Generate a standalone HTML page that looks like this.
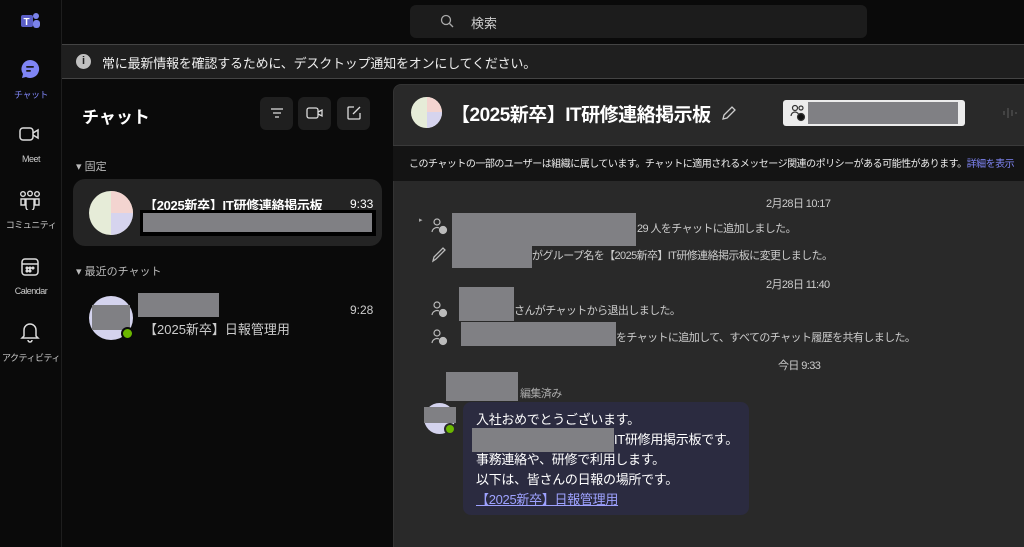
<!DOCTYPE html>
<html><head><meta charset="utf-8"><style>
*{margin:0;padding:0;box-sizing:border-box}
body{width:1024px;height:547px;overflow:hidden;background:#0a0a0a;font-family:"Liberation Sans","Noto Sans CJK JP",sans-serif;color:#fff;position:relative}
.a{position:absolute}
.g{background:#808084;position:absolute}
.rail{left:0;top:0;width:62px;height:547px;border-right:1px solid #1e1e1e}
.ri{position:absolute;left:0;width:62px;text-align:center;font-size:9px;color:#ccc;letter-spacing:-0.5px;white-space:nowrap}
.sys{font-size:11px;color:#ccc;position:absolute;letter-spacing:-0.6px;white-space:nowrap}
</style></head><body>
<div class="a rail">
 <svg class="a" style="left:19px;top:11px" width="22" height="20"><rect x="2" y="4" width="12" height="12" rx="2" fill="#5b5fc7"/><text x="4.5" y="14" font-size="10" font-weight="bold" fill="#fff" font-family="Liberation Sans">T</text><circle cx="17" cy="5" r="3" fill="#7b83eb"/><rect x="14" y="9" width="7" height="8" rx="3" fill="#7b83eb"/></svg>
 <svg class="a" style="left:19px;top:58px" width="22" height="22"><path d="M11 2a9 9 0 1 1-4 17l-4 1 1-4A9 9 0 0 1 11 2z" fill="#7f85f5"/><rect x="7" y="8" width="8" height="1.8" rx="1" fill="#1a1a1a"/><rect x="7" y="12" width="5" height="1.8" rx="1" fill="#1a1a1a"/></svg>
 <div class="ri" style="top:88px;color:#7f85f5">チャット</div>
 <svg class="a" style="left:19px;top:125px" width="22" height="18"><rect x="1" y="3" width="13" height="12" rx="3" fill="none" stroke="#ddd" stroke-width="1.5"/><path d="M14 8l5-3v8l-5-3" fill="none" stroke="#ddd" stroke-width="1.5"/></svg>
 <div class="ri" style="top:154px">Meet</div>
 <svg class="a" style="left:18px;top:190px" width="24" height="20" fill="none" stroke="#ddd" stroke-width="1.4"><circle cx="5" cy="4" r="2.3"/><circle cx="12" cy="3.5" r="2.3"/><circle cx="19" cy="4" r="2.3"/><path d="M3 9h4v6H3zM8 9h8v8a4 4 0 0 1-8 0zM17 9h4v6h-4z"/></svg>
 <div class="ri" style="top:218px">コミュニティ</div>
 <svg class="a" style="left:20px;top:257px" width="20" height="20" fill="none" stroke="#ddd" stroke-width="1.5"><rect x="2" y="2" width="16" height="16" rx="3"/><path d="M2 7h16"/><circle cx="7" cy="11" r=".8" fill="#ddd"/><circle cx="10" cy="11" r=".8" fill="#ddd"/><circle cx="13" cy="11" r=".8" fill="#ddd"/><circle cx="7" cy="14" r=".8" fill="#ddd"/><circle cx="10" cy="14" r=".8" fill="#ddd"/></svg>
 <div class="ri" style="top:286px">Calendar</div>
 <svg class="a" style="left:20px;top:321px" width="20" height="22" fill="none" stroke="#ddd" stroke-width="1.5"><path d="M4 15V9a6 6 0 0 1 12 0v6l2 2H2z"/><path d="M8 19a2 2 0 0 0 4 0"/></svg>
 <div class="ri" style="top:351px">アクティビティ</div>
</div>
<div class="a" style="left:410px;top:5px;width:457px;height:33px;background:#1c1c1c;border-radius:6px"></div>
<svg class="a" style="left:440px;top:14px" width="14" height="14" fill="none" stroke="#aaa" stroke-width="1.3"><circle cx="6" cy="6" r="4.5"/><path d="M9.5 9.5l3.5 3.5"/></svg>
<div class="a" style="left:471px;top:13px;font-size:13px;color:#ccc">検索</div>
<div class="a" style="left:62px;top:44px;width:962px;height:35px;background:#1f1f1f;border-top:1px solid #444;border-bottom:1px solid #444"></div>
<div class="a" style="left:76px;top:54px;width:15px;height:15px;border-radius:50%;background:#c0c0c0;color:#1f1f1f;font-size:11px;text-align:center;line-height:15px;font-weight:bold">i</div>
<div class="a" style="left:102px;top:53px;font-size:13px;color:#eee;letter-spacing:-0.2px">常に最新情報を確認するために、デスクトップ通知をオンにしてください。</div>

<div class="a" style="left:82px;top:103px;font-size:17px;font-weight:bold">チャット</div>
<div class="a" style="left:260px;top:97px;width:33px;height:33px;background:#1f1f1f;border-radius:6px"></div>
<div class="a" style="left:298px;top:97px;width:33px;height:33px;background:#1f1f1f;border-radius:6px"></div>
<div class="a" style="left:337px;top:97px;width:33px;height:33px;background:#1f1f1f;border-radius:6px"></div>
<svg class="a" style="left:269px;top:106px" width="16" height="14" stroke="#ddd" stroke-width="1.2"><path d="M2 3h12M4 7h8M6 11h4"/></svg>
<svg class="a" style="left:306px;top:106px" width="18" height="14" fill="none" stroke="#ddd" stroke-width="1.3"><rect x="1" y="2" width="11" height="10" rx="2"/><path d="M12 6l4-2v6l-4-2"/></svg>
<svg class="a" style="left:346px;top:105px" width="16" height="16" fill="none" stroke="#ddd" stroke-width="1.3"><path d="M8 2H3a1 1 0 0 0-1 1v10a1 1 0 0 0 1 1h10a1 1 0 0 0 1-1V8"/><path d="M7 9l7-7"/></svg>
<div class="a" style="left:76px;top:158px;font-size:11px;color:#bbb">▾ 固定</div>
<div class="a" style="left:73px;top:179px;width:309px;height:67px;background:#242424;border-radius:12px"></div>
<div class="a" style="left:89px;top:191px;width:44px;height:44px;border-radius:50%;overflow:hidden;background:#e6ecd8"><div class="a" style="left:22px;top:0;width:22px;height:22px;background:#f3d4d0"></div><div class="a" style="left:22px;top:22px;width:22px;height:22px;background:#d6d4ee"></div></div>
<div class="a" style="left:144px;top:195px;font-size:13px;font-weight:bold;letter-spacing:-0.3px">【2025新卒】IT研修連絡掲示板</div>
<div class="a" style="left:350px;top:197px;font-size:12px">9:33</div>
<div class="a" style="left:140px;top:210px;width:236px;height:26px;background:#000"></div>
<div class="g" style="left:143px;top:213px;width:229px;height:19px"></div>
<div class="a" style="left:76px;top:263px;font-size:11px;color:#bbb">▾ 最近のチャット</div>
<div class="a" style="left:89px;top:296px;width:44px;height:44px;border-radius:50%;background:#d4d3ee"></div>
<div class="g" style="left:92px;top:305px;width:38px;height:25px"></div>
<div class="a" style="left:121px;top:327px;width:13px;height:13px;border-radius:50%;background:#6bb700;border:2px solid #0a0a0a"></div>
<div class="g" style="left:138px;top:293px;width:81px;height:24px"></div>
<div class="a" style="left:350px;top:303px;font-size:12px;color:#ccc">9:28</div>
<div class="a" style="left:144px;top:319px;font-size:13px;color:#ccc">【2025新卒】日報管理用</div>

<div class="a" style="left:393px;top:84px;width:631px;height:463px;background:#292929;border-radius:8px 0 0 0;border-left:1px solid #333;border-top:1px solid #333"></div>
<div class="a" style="left:393px;top:145px;width:631px;height:1px;background:#3a3a3a"></div>
<div class="a" style="left:411px;top:97px;width:31px;height:31px;border-radius:50%;overflow:hidden;background:#e6ecd8"><div class="a" style="left:16px;top:0;width:15px;height:15px;background:#f3d4d0"></div><div class="a" style="left:16px;top:15px;width:15px;height:16px;background:#d6d4ee"></div></div>
<div class="a" style="left:451px;top:100px;font-size:19px;font-weight:bold;letter-spacing:-0.5px">【2025新卒】IT研修連絡掲示板</div>
<svg class="a" style="left:720px;top:104px" width="18" height="18" fill="none" stroke="#ccc" stroke-width="1.3"><path d="M3 15l1-4 8-8 3 3-8 8z"/></svg>
<div class="a" style="left:783px;top:100px;width:182px;height:26px;background:#ececec;border-radius:3px"></div>
<div class="g" style="left:808px;top:102px;width:150px;height:22px"></div>
<svg class="a" style="left:790px;top:104px" width="16" height="18" fill="none" stroke="#333" stroke-width="1.2"><circle cx="5" cy="4" r="2.5"/><circle cx="11" cy="4" r="2"/><path d="M1 12a4 4 0 0 1 8 0"/><circle cx="11" cy="13" r="3.5" fill="#111"/></svg>
<svg class="a" style="left:1000px;top:104px" width="20" height="18" stroke="#555" stroke-width="1.2"><path d="M4 7v4M8 4v10M12 6v6M16 8v2"/></svg>
<div class="a" style="left:393px;top:146px;width:631px;height:35px;background:#141414"></div>
<div class="a" style="left:409px;top:155px;font-size:10px;color:#eee;white-space:nowrap;letter-spacing:-0.5px">このチャットの一部のユーザーは組織に属しています。チャットに適用されるメッセージ関連のポリシーがある可能性があります。<span style="color:#7f85f5">詳細を表示</span></div>

<div class="sys" style="left:766px;top:195px">2月28日 10:17</div>
<div class="a" style="left:419px;top:216px;font-size:7px;color:#aaa">▸</div>
<svg class="a" style="left:430px;top:217px" width="18" height="18" fill="none" stroke="#bbb" stroke-width="1.2"><circle cx="7" cy="5" r="3"/><path d="M2 15a5 5 0 0 1 7-4"/><circle cx="13" cy="13" r="3.5" fill="#bbb"/></svg>
<div class="g" style="left:452px;top:213px;width:184px;height:33px"></div>
<div class="sys" style="left:637px;top:220px">29 人をチャットに追加しました。</div>
<svg class="a" style="left:430px;top:245px" width="18" height="18" fill="none" stroke="#bbb" stroke-width="1.3"><path d="M3 16l1-4 9-9 2 2-9 9z"/></svg>
<div class="g" style="left:452px;top:241px;width:80px;height:27px"></div>
<div class="sys" style="left:532px;top:247px">がグループ名を【2025新卒】IT研修連絡掲示板に変更しました。</div>
<div class="sys" style="left:766px;top:276px">2月28日 11:40</div>
<svg class="a" style="left:430px;top:300px" width="18" height="18" fill="none" stroke="#bbb" stroke-width="1.2"><circle cx="7" cy="5" r="3"/><path d="M2 15a5 5 0 0 1 7-4"/><circle cx="13" cy="13" r="3.5" fill="#bbb"/></svg>
<div class="g" style="left:459px;top:287px;width:55px;height:34px"></div>
<div class="sys" style="left:514px;top:302px">さんがチャットから退出しました。</div>
<svg class="a" style="left:430px;top:328px" width="18" height="18" fill="none" stroke="#bbb" stroke-width="1.2"><circle cx="7" cy="5" r="3"/><path d="M2 15a5 5 0 0 1 7-4"/><circle cx="13" cy="13" r="3.5" fill="#bbb"/></svg>
<div class="g" style="left:461px;top:322px;width:155px;height:24px"></div>
<div class="sys" style="left:616px;top:329px">をチャットに追加して、すべてのチャット履歴を共有しました。</div>
<div class="sys" style="left:778px;top:357px">今日 9:33</div>
<div class="g" style="left:446px;top:372px;width:72px;height:29px"></div>
<div class="sys" style="left:520px;top:385px;color:#aaa">編集済み</div>
<div class="a" style="left:424px;top:403px;width:31px;height:31px;border-radius:50%;background:#d4d3ee"></div>
<div class="g" style="left:424px;top:407px;width:32px;height:16px"></div>
<div class="a" style="left:444px;top:423px;width:12px;height:12px;border-radius:50%;background:#6bb700;border:2px solid #292929"></div>
<div class="a" style="left:463px;top:402px;width:286px;height:113px;background:#2b2b40;border-radius:8px"></div>
<div class="a" style="left:476px;top:410px;font-size:13px;line-height:20px;color:#fff;letter-spacing:-0.3px">入社おめでとうございます。<br><span style="display:inline-block;width:138px"></span>IT研修用掲示板です。<br>事務連絡や、研修で利用します。<br>以下は、皆さんの日報の場所です。<br><span style="color:#9ea2ff;text-decoration:underline">【2025新卒】日報管理用</span></div>
<div class="g" style="left:472px;top:428px;width:142px;height:24px"></div>
</body></html>
